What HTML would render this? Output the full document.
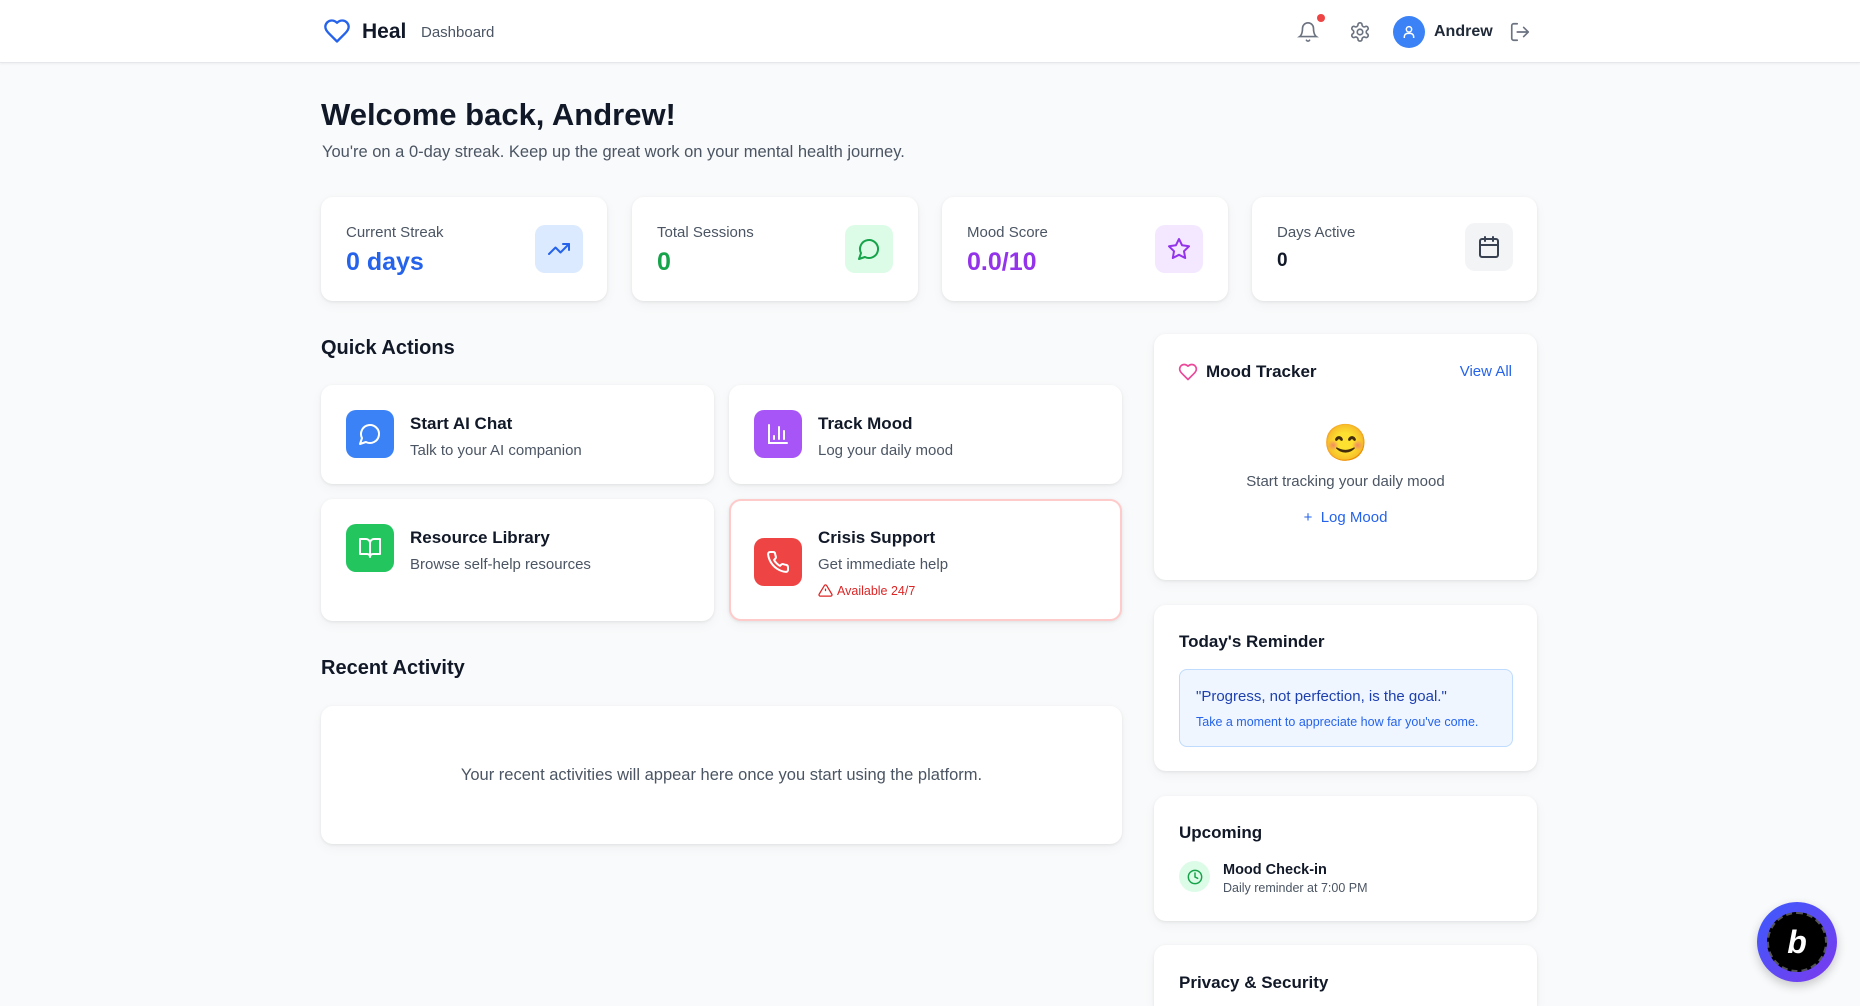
<!DOCTYPE html>
<html style="width:1860px;height:1006px;overflow:hidden"><head><meta charset="utf-8"><style>
*{box-sizing:border-box;margin:0;padding:0}
body{width:1860px;height:1006px;overflow:hidden;background:#f9fafb;font-family:"Liberation Sans",Arial,sans-serif;color:#111827;position:relative}
.hdr{position:absolute;left:0;top:0;width:1860px;height:63px;background:#fff;border-bottom:1px solid #e5e7eb;box-shadow:0 1px 2px rgba(0,0,0,.05)}
.abs{position:absolute}
.card{position:absolute;background:#fff;border-radius:12px;box-shadow:0 1px 3px rgba(0,0,0,.08),0 4px 12px rgba(0,0,0,.04)}
.lbl{position:absolute;left:25px;top:27px;font-size:15px;color:#4b5563}
.val{position:absolute;left:25px;top:51px;font-size:25px;font-weight:bold}
.ib{position:absolute;width:48px;height:48px;border-radius:10px;display:flex;align-items:center;justify-content:center}
.h2{position:absolute;font-size:20px;font-weight:bold;color:#111827}
.at{position:absolute;left:89px;font-size:17px;font-weight:bold}
.as{position:absolute;left:89px;font-size:15px;color:#4b5563}
.aic{position:absolute;left:25px;width:48px;height:48px;border-radius:10px;display:flex;align-items:center;justify-content:center}
.ct{position:absolute;left:25px;font-size:17px;font-weight:bold}
</style></head><body>
<div class="hdr">
  <svg class="abs" style="left:322px;top:17px" width="30" height="28" viewBox="0 0 24 24" fill="none" stroke="#2563eb" stroke-width="2" stroke-linejoin="round"><path d="M19 14c1.5-1.5 3-3.2 3-5.5A5.5 5.5 0 0 0 16.5 3c-1.8 0-3 .5-4.5 2-1.5-1.5-2.7-2-4.5-2A5.5 5.5 0 0 0 2 8.5c0 2.3 1.5 4 3 5.5l7 7Z"/></svg>
  <div class="abs" style="left:362px;top:20px;font-size:21px;font-weight:bold">Heal</div>
  <div class="abs" style="left:421px;top:24px;font-size:15px;color:#4b5563">Dashboard</div>
  <svg class="abs" style="left:1297px;top:21px" width="22" height="22" viewBox="0 0 24 24" fill="none" stroke="#6b7280" stroke-width="1.8" stroke-linecap="round"><path d="M6 8a6 6 0 0 1 12 0c0 7 3 9 3 9H3s3-2 3-9"/><path d="M10.3 21a1.94 1.94 0 0 0 3.4 0"/></svg>
  <div class="abs" style="left:1317px;top:14px;width:8px;height:8px;border-radius:50%;background:#ef4444"></div>
  <svg class="abs" style="left:1349px;top:21px" width="22" height="22" viewBox="0 0 24 24" fill="none" stroke="#6b7280" stroke-width="1.8"><circle cx="12" cy="12" r="3"/><path d="M12.2 2h-.4a2 2 0 0 0-2 2v.2a2 2 0 0 1-1 1.7l-.4.3a2 2 0 0 1-2 0l-.2-.1a2 2 0 0 0-2.7.7l-.2.4a2 2 0 0 0 .7 2.7l.2.1a2 2 0 0 1 1 1.7v.5a2 2 0 0 1-1 1.7l-.2.1a2 2 0 0 0-.7 2.7l.2.4a2 2 0 0 0 2.7.7l.2-.1a2 2 0 0 1 2 0l.4.3a2 2 0 0 1 1 1.7v.2a2 2 0 0 0 2 2h.4a2 2 0 0 0 2-2v-.2a2 2 0 0 1 1-1.7l.4-.3a2 2 0 0 1 2 0l.2.1a2 2 0 0 0 2.7-.7l.2-.4a2 2 0 0 0-.7-2.7l-.2-.1a2 2 0 0 1-1-1.7v-.5a2 2 0 0 1 1-1.7l.2-.1a2 2 0 0 0 .7-2.7l-.2-.4a2 2 0 0 0-2.7-.7l-.2.1a2 2 0 0 1-2 0l-.4-.3a2 2 0 0 1-1-1.7V4a2 2 0 0 0-2-2z"/></svg>
  <div class="abs" style="left:1393px;top:16px;width:32px;height:32px;border-radius:50%;background:#3b82f6;display:flex;align-items:center;justify-content:center"><svg width="16" height="16" viewBox="0 0 24 24" fill="none" stroke="#fff" stroke-width="2.2"><circle cx="12" cy="8" r="4"/><path d="M5 21v-2a5 5 0 0 1 5-5h4a5 5 0 0 1 5 5v2"/></svg></div>
  <div class="abs" style="left:1434px;top:23px;font-size:16px;font-weight:bold;color:#1f2937">Andrew</div>
  <svg class="abs" style="left:1509px;top:21px" width="22" height="22" viewBox="0 0 24 24" fill="none" stroke="#6b7280" stroke-width="1.8" stroke-linecap="round" stroke-linejoin="round"><path d="M9 21H5a2 2 0 0 1-2-2V5a2 2 0 0 1 2-2h4"/><path d="m16 17 5-5-5-5M21 12H9"/></svg>
</div>

<div class="abs" style="left:321px;top:97px;font-size:31px;font-weight:bold">Welcome back, Andrew!</div>
<div class="abs" style="left:322px;top:143px;font-size:16.5px;color:#4b5563">You're on a 0-day streak. Keep up the great work on your mental health journey.</div>

<div class="card" style="left:321px;top:197px;width:286px;height:104px">
  <div class="lbl">Current Streak</div><div class="val" style="color:#2563eb">0 days</div>
  <div class="ib" style="left:214px;top:28px;background:#dbeafe"><svg width="24" height="24" viewBox="0 0 24 24" fill="none" stroke="#2563eb" stroke-width="2" stroke-linecap="round" stroke-linejoin="round"><path d="m22 7-8.5 8.5-5-5L2 17"/><path d="M16 7h6v6"/></svg></div>
</div>
<div class="card" style="left:632px;top:197px;width:286px;height:104px">
  <div class="lbl">Total Sessions</div><div class="val" style="color:#16a34a">0</div>
  <div class="ib" style="left:213px;top:28px;background:#dcfce7"><svg width="24" height="24" viewBox="0 0 24 24" fill="none" stroke="#16a34a" stroke-width="2" stroke-linejoin="round"><path d="M7.9 20A9 9 0 1 0 4 16.1L2 22Z"/></svg></div>
</div>
<div class="card" style="left:942px;top:197px;width:286px;height:104px">
  <div class="lbl">Mood Score</div><div class="val" style="color:#9333ea">0.0/10</div>
  <div class="ib" style="left:213px;top:28px;background:#f3e8ff"><svg width="24" height="24" viewBox="0 0 24 24" fill="none" stroke="#9333ea" stroke-width="2" stroke-linejoin="round"><path d="M12 2l3.1 6.3 6.9 1-5 4.9 1.2 6.8L12 17.8 5.8 21l1.2-6.8-5-4.9 6.9-1z"/></svg></div>
</div>
<div class="card" style="left:1252px;top:197px;width:285px;height:104px">
  <div class="lbl">Days Active</div><div class="val" style="color:#111827;font-size:19px;top:53px">0</div>
  <div class="ib" style="left:213px;top:26px;background:#f3f4f6"><svg width="24" height="24" viewBox="0 0 24 24" fill="none" stroke="#374151" stroke-width="2" stroke-linecap="round"><rect x="3" y="4" width="18" height="18" rx="2"/><path d="M16 2v4M8 2v4M3 10h18"/></svg></div>
</div>

<div class="h2" style="left:321px;top:337px">Quick Actions</div>

<div class="card" style="left:321px;top:385px;width:393px;height:99px">
  <div class="aic" style="top:25px;background:#3b82f6"><svg width="24" height="24" viewBox="0 0 24 24" fill="none" stroke="#fff" stroke-width="2" stroke-linejoin="round"><path d="M7.9 20A9 9 0 1 0 4 16.1L2 22Z"/></svg></div>
  <div class="at" style="top:29px">Start AI Chat</div><div class="as" style="top:57px">Talk to your AI companion</div>
</div>
<div class="card" style="left:729px;top:385px;width:393px;height:99px">
  <div class="aic" style="top:25px;background:#a855f7"><svg width="24" height="24" viewBox="0 0 24 24" fill="none" stroke="#fff" stroke-width="2" stroke-linecap="round"><path d="M3 3v18h18M18 17V9M13 17V5M8 17v-3"/></svg></div>
  <div class="at" style="top:29px">Track Mood</div><div class="as" style="top:57px">Log your daily mood</div>
</div>
<div class="card" style="left:321px;top:499px;width:393px;height:122px">
  <div class="aic" style="top:25px;background:#22c55e"><svg width="24" height="24" viewBox="0 0 24 24" fill="none" stroke="#fff" stroke-width="2" stroke-linejoin="round"><path d="M2 3h6a4 4 0 0 1 4 4v14a3 3 0 0 0-3-3H2zM22 3h-6a4 4 0 0 0-4 4v14a3 3 0 0 1 3-3h7z"/></svg></div>
  <div class="at" style="top:29px">Resource Library</div><div class="as" style="top:57px">Browse self-help resources</div>
</div>
<div class="card" style="left:729px;top:499px;width:393px;height:122px;border:2px solid #fecaca">
  <div class="aic" style="left:23px;top:37px;background:#ef4444"><svg width="24" height="24" viewBox="0 0 24 24" fill="none" stroke="#fff" stroke-width="2" stroke-linejoin="round"><path d="M22 16.9v3a2 2 0 0 1-2.2 2 19.8 19.8 0 0 1-8.6-3.1 19.5 19.5 0 0 1-6-6A19.8 19.8 0 0 1 2.1 4.2 2 2 0 0 1 4.1 2h3a2 2 0 0 1 2 1.7c.1 1 .4 1.9.7 2.8a2 2 0 0 1-.5 2.1L8 9.9a16 16 0 0 0 6 6l1.3-1.3a2 2 0 0 1 2.1-.4c.9.3 1.8.6 2.8.7a2 2 0 0 1 1.7 2z"/></svg></div>
  <div class="at" style="left:87px;top:27px">Crisis Support</div><div class="as" style="left:87px;top:55px">Get immediate help</div>
  <div class="abs" style="left:87px;top:82px;font-size:12.5px;color:#dc2626;display:flex;align-items:center;gap:4px"><svg width="15" height="15" viewBox="0 0 24 24" fill="none" stroke="#dc2626" stroke-width="2" stroke-linejoin="round"><path d="M10.3 3.9 1.8 18a2 2 0 0 0 1.7 3h17a2 2 0 0 0 1.7-3L13.7 3.9a2 2 0 0 0-3.4 0zM12 9v4M12 17h.01"/></svg>Available 24/7</div>
</div>

<div class="h2" style="left:321px;top:657px">Recent Activity</div>
<div class="card" style="left:321px;top:706px;width:801px;height:138px">
  <div class="abs" style="left:0;width:801px;top:60px;text-align:center;font-size:16.5px;color:#4b5563">Your recent activities will appear here once you start using the platform.</div>
</div>

<div class="card" style="left:1154px;top:334px;width:383px;height:246px">
  <svg class="abs" style="left:24px;top:28px" width="20" height="20" viewBox="0 0 24 24" fill="none" stroke="#ec4899" stroke-width="2" stroke-linejoin="round"><path d="M19 14c1.5-1.5 3-3.2 3-5.5A5.5 5.5 0 0 0 16.5 3c-1.8 0-3 .5-4.5 2-1.5-1.5-2.7-2-4.5-2A5.5 5.5 0 0 0 2 8.5c0 2.3 1.5 4 3 5.5l7 7Z"/></svg>
  <div class="ct" style="left:52px;top:28px">Mood Tracker</div>
  <div class="abs" style="right:25px;top:29px;font-size:15px;color:#2563eb">View All</div>
  <div class="abs" style="left:0;width:383px;top:88px;text-align:center;font-size:36px">😊</div>
  <div class="abs" style="left:0;width:383px;top:139px;text-align:center;font-size:15px;color:#4b5563">Start tracking your daily mood</div>
  <div class="abs" style="left:0;width:383px;top:175px;text-align:center;font-size:15px;color:#2563eb">+&nbsp; Log Mood</div>
</div>

<div class="card" style="left:1154px;top:605px;width:383px;height:166px">
  <div class="ct" style="top:27px">Today's Reminder</div>
  <div class="abs" style="left:25px;top:64px;width:334px;height:78px;background:#eff6ff;border:1px solid #bfdbfe;border-radius:8px">
    <div class="abs" style="left:16px;top:18px;font-size:15px;color:#1e40af">"Progress, not perfection, is the goal."</div>
    <div class="abs" style="left:16px;top:45px;font-size:12.5px;color:#2563eb">Take a moment to appreciate how far you've come.</div>
  </div>
</div>

<div class="card" style="left:1154px;top:796px;width:383px;height:125px">
  <div class="ct" style="top:27px">Upcoming</div>
  <div class="abs" style="left:25px;top:65px;width:31px;height:31px;border-radius:50%;background:#dcfce7;display:flex;align-items:center;justify-content:center"><svg width="16" height="16" viewBox="0 0 24 24" fill="none" stroke="#16a34a" stroke-width="2.2" stroke-linecap="round"><circle cx="12" cy="12" r="10"/><path d="M12 6v6l4 2"/></svg></div>
  <div class="abs" style="left:69px;top:66px;font-size:14.5px;font-weight:bold">Mood Check-in</div>
  <div class="abs" style="left:69px;top:85px;font-size:12.5px;color:#4b5563">Daily reminder at 7:00 PM</div>
</div>

<div class="card" style="left:1154px;top:945px;width:383px;height:61px;border-radius:12px 12px 0 0">
  <div class="ct" style="top:28px">Privacy &amp; Security</div>
</div>

<div class="abs" style="left:1757px;top:902px;width:80px;height:80px;border-radius:50%;background:linear-gradient(135deg,#3b5bfd,#7c3aed);box-shadow:0 4px 10px rgba(0,0,0,.2);display:flex;align-items:center;justify-content:center">
  <div style="width:60px;height:60px;border-radius:50%;background:#000;display:flex;align-items:center;justify-content:center;color:#fff;font-weight:bold;font-size:32px;font-style:italic;border:2px dashed #555">b</div>
</div>
</body></html>
